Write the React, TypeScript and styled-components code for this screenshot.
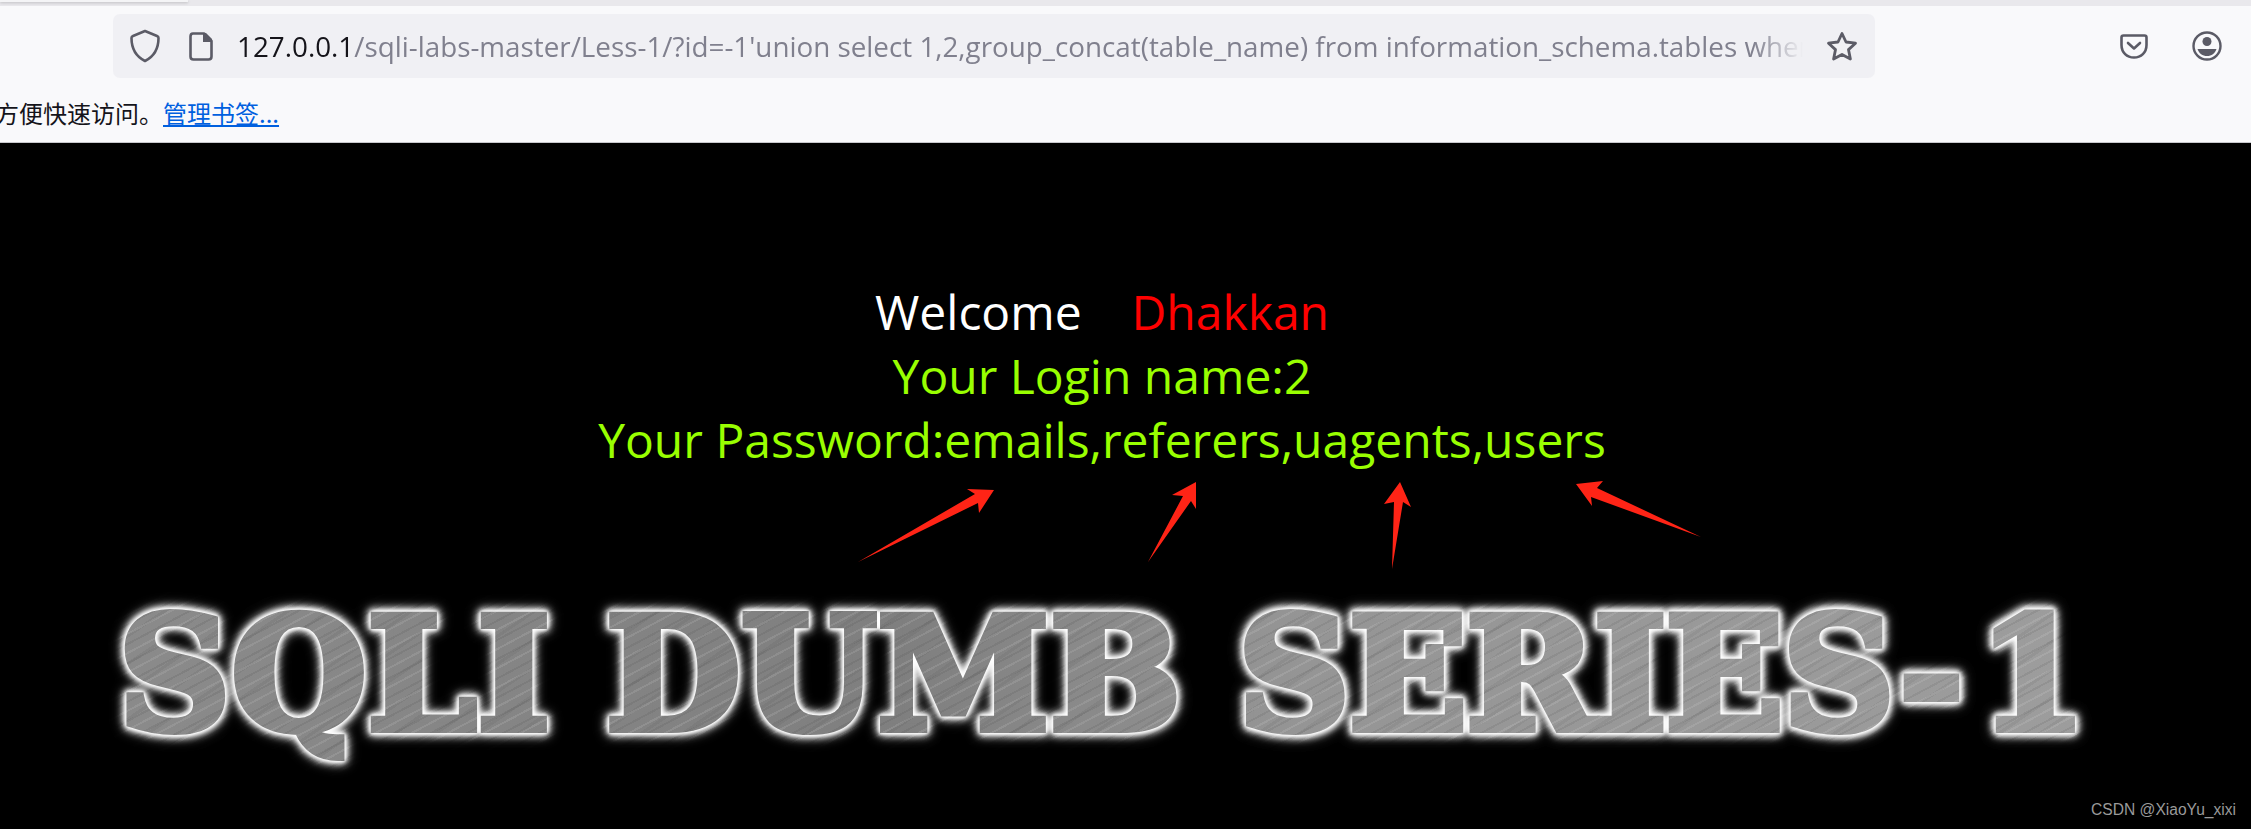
import React from 'react';
import styled, { createGlobalStyle } from 'styled-components';

const URL_HOST = '127.0.0.1';
const URL_REST = "/sqli-labs-master/Less-1/?id=-1'union select 1,2,group_concat(table_name) from information_schema.tables where table_schema=database()--+";

const ARROWS = [
  '858,562 975,494 967,489 994,490 979,513 978,503',
  '1148,562 1183,496 1172,495 1196,482 1196,509 1191,501',
  '1392,569 1394,502 1384,504 1400,482 1411,507 1403,502',
  '1701,537 1597,488 1603,481 1576,484 1592,506 1591,497',
];

const App = () => (
  <>
    <GlobalStyle />
    <StBrowser>
      <StTabStrip>
        <StTabEdge />
      </StTabStrip>
      <StNavRow>
        <StUrlBar>
          <StIcon width="30" height="34" viewBox="0 0 30 34">
            <path
              d="M15 2 L27 7 C28 7.4 28.5 8 28.5 9 C28.5 20 23 28 15 32 C7 28 1.5 20 1.5 9 C1.5 8 2 7.4 3 7 Z"
              fill="none"
              stroke="#5b5b66"
              strokeWidth="2.6"
              strokeLinejoin="round"
            />
          </StIcon>
          <StDocIcon width="24" height="29" viewBox="0 0 24 29">
            <path
              d="M4 1.5 H15 L22.5 9 V24.5 C22.5 26.2 21.2 27.5 19.5 27.5 H4.5 C2.8 27.5 1.5 26.2 1.5 24.5 V4.5 C1.5 2.8 2.5 1.5 4 1.5 Z"
              fill="none"
              stroke="#5b5b66"
              strokeWidth="2.6"
              strokeLinejoin="round"
            />
            <path d="M14 1 H17 L23 7 V10 H14 Z" fill="#5b5b66" />
          </StDocIcon>
          <StUrlText>
            <StHost>{URL_HOST}</StHost>
            {URL_REST}
          </StUrlText>
          <StStarIcon width="32" height="31" viewBox="0 0 32 31">
            <path
              d="M16 2.5 L20 11 L29.5 12.2 L22.5 18.6 L24.4 28 L16 23.4 L7.6 28 L9.5 18.6 L2.5 12.2 L12 11 Z"
              fill="none"
              stroke="#5b5b66"
              strokeWidth="2.8"
              strokeLinejoin="round"
            />
          </StStarIcon>
        </StUrlBar>
        <StActions>
          <svg width="28" height="25" viewBox="0 0 28 25">
            <path
              d="M3.5 1.5 H24.5 C25.8 1.5 26.5 2.2 26.5 3.5 V11 C26.5 18.5 21 23.5 14 23.5 C7 23.5 1.5 18.5 1.5 11 V3.5 C1.5 2.2 2.2 1.5 3.5 1.5 Z"
              fill="none"
              stroke="#5b5b66"
              strokeWidth="2.6"
            />
            <path d="M8 9 L14 14.5 L20 9" fill="none" stroke="#5b5b66" strokeWidth="2.6" strokeLinecap="round" strokeLinejoin="round" />
          </svg>
          <svg width="30" height="30" viewBox="0 0 30 30">
            <circle cx="15" cy="15" r="13.5" fill="none" stroke="#5b5b66" strokeWidth="2.4" />
            <circle cx="15" cy="10.5" r="4.5" fill="#5b5b66" />
            <path d="M5.5 18 H24.5 C23 22.5 19.5 25 15 25 C10.5 25 7 22.5 5.5 18 Z" fill="#5b5b66" />
          </svg>
        </StActions>
      </StNavRow>
      <StBookmarkRow>
        方便快速访问。<StLink href="#">管理书签...</StLink>
      </StBookmarkRow>
    </StBrowser>
    <StPage>
      <StGreeting>
        <StLine color="#ffffff">
          Welcome&nbsp;&nbsp;&nbsp;&nbsp;<StName>Dhakkan</StName>
        </StLine>
        <StLine color="#99ff00">Your Login name:2</StLine>
        <StLine color="#99ff00">Your Password:emails,referers,uagents,users</StLine>
      </StGreeting>
      <StLogo>
        <StLogoText>
          <StLogoFirstWord>SQLI DUMB</StLogoFirstWord>
          <span>SERIES-</span>
          <StLogoOne>1</StLogoOne>
        </StLogoText>
        <StLogoTexture />
      </StLogo>
      <StWatermark>CSDN @XiaoYu_xixi</StWatermark>
    </StPage>
    <StArrows viewBox="0 0 2251 829" width="2251" height="829">
      {ARROWS.map((points) => (
        <polygon key={points} points={points} fill="#ff2416" />
      ))}
    </StArrows>
  </>
);

export default App;

const GlobalStyle = createGlobalStyle`
  html, body {
    margin: 0;
    height: 829px;
    overflow: hidden;
    background: #000;
  }
  #root {
    position: relative;
    height: 829px;
    overflow: hidden;
  }
`;

const StBrowser = styled.header`
  display: flex;
  flex-direction: column;
  height: 142px;
  background-color: #f9f9fb;
  border-bottom: 1px solid #c8c8cc;
  box-sizing: content-box;
`;

const StTabStrip = styled.div`
  height: 6px;
  background-color: #e9e8ec;
`;

const StTabEdge = styled.div`
  width: 188px;
  height: 2px;
  background-color: #f4f4f6;
  box-shadow: 0 1px 3px rgba(0, 0, 0, 0.2);
`;

const StNavRow = styled.div`
  display: flex;
  align-items: center;
  height: 80px;
  padding-left: 113px;
`;

const StUrlBar = styled.div`
  display: flex;
  align-items: center;
  width: 1762px;
  height: 64px;
  padding: 0 17px;
  box-sizing: border-box;
  background-color: #f0f0f4;
  border-radius: 7px;
`;

const StIcon = styled.svg`
  flex: none;
`;

const StDocIcon = styled.svg`
  flex: none;
  margin-left: 29px;
`;

const StStarIcon = styled.svg`
  flex: none;
  margin-left: 23px;
`;

const StUrlText = styled.div`
  flex: 1;
  min-width: 0;
  margin-left: 24px;
  overflow: hidden;
  white-space: nowrap;
  color: #80808e;
  font-family: 'Open Sans', 'Noto Sans', sans-serif;
  font-size: 27.8px;
  -webkit-mask-image: linear-gradient(to right, #000 calc(100% - 50px), transparent);
  mask-image: linear-gradient(to right, #000 calc(100% - 50px), transparent);
`;

const StHost = styled.span`
  color: #15141a;
`;

const StActions = styled.div`
  display: flex;
  align-items: center;
  gap: 44px;
  margin-left: 245px;
`;

const StBookmarkRow = styled.div`
  display: flex;
  align-items: center;
  height: 52px;
  margin-left: -5px;
  color: #15141a;
  font-family: 'Noto Sans CJK SC', sans-serif;
  font-size: 24px;
`;

const StLink = styled.a`
  color: #0060df;
  text-decoration: underline;
`;

const StPage = styled.main`
  position: relative;
  display: flex;
  flex-direction: column;
  align-items: center;
  height: 686px;
  padding-top: 137px;
  padding-right: 47px;
  box-sizing: border-box;
  background-color: #000;
`;

const StGreeting = styled.div`
  display: flex;
  flex-direction: column;
  align-items: center;
  font-family: 'Open Sans', 'Noto Sans', sans-serif;
  font-size: 48px;
  line-height: 64px;
  white-space: nowrap;
`;

const StLine = styled.div<{ color: string }>`
  color: ${({ color }) => color};
`;

const StName = styled.span`
  color: #ff0000;
`;

const StLogo = styled.div`
  position: relative;
  isolation: isolate;
  margin-top: 101px;
  padding: 24px;
  background-color: #000;
`;

const StLogoText = styled.div`
  display: flex;
  gap: 56px;
  font-family: 'DejaVu Serif', serif;
  font-weight: 700;
  font-size: 155px;
  line-height: 155px;
  letter-spacing: -1px;
  white-space: nowrap;
  color: #8a8a8a;
  -webkit-text-stroke: 8px #8a8a8a;
  filter: drop-shadow(0 0 1.5px #fff) drop-shadow(0 0 2px #fff) drop-shadow(0 0 3px #fff) drop-shadow(0 0 5px rgba(255, 255, 255, 0.9));
`;

const StLogoFirstWord = styled.span`
  letter-spacing: 1px;
`;

const StLogoOne = styled.span`
  margin-left: -40px;
`;

// brushed metal scratches, blended so the black around the letters stays black
const StLogoTexture = styled.div`
  position: absolute;
  top: 0;
  right: 0;
  bottom: 0;
  left: 0;
  mix-blend-mode: overlay;
  background-image:
    repeating-linear-gradient(152deg, rgba(255, 255, 255, 0.1) 0 2px, transparent 2px 9px, rgba(0, 0, 0, 0.08) 9px 11px, transparent 11px 17px),
    repeating-linear-gradient(146deg, rgba(0, 0, 0, 0.06) 0 3px, transparent 3px 23px),
    linear-gradient(90deg, #808080, #747474 40%, #8c8c8c 60%, #949494);
`;

const StWatermark = styled.div`
  position: absolute;
  right: 15px;
  bottom: 10px;
  color: #9a9a9a;
  font-family: 'Liberation Sans', sans-serif;
  font-size: 15.6px;
`;

const StArrows = styled.svg`
  position: absolute;
  top: 0;
  left: 0;
  pointer-events: none;
`;
